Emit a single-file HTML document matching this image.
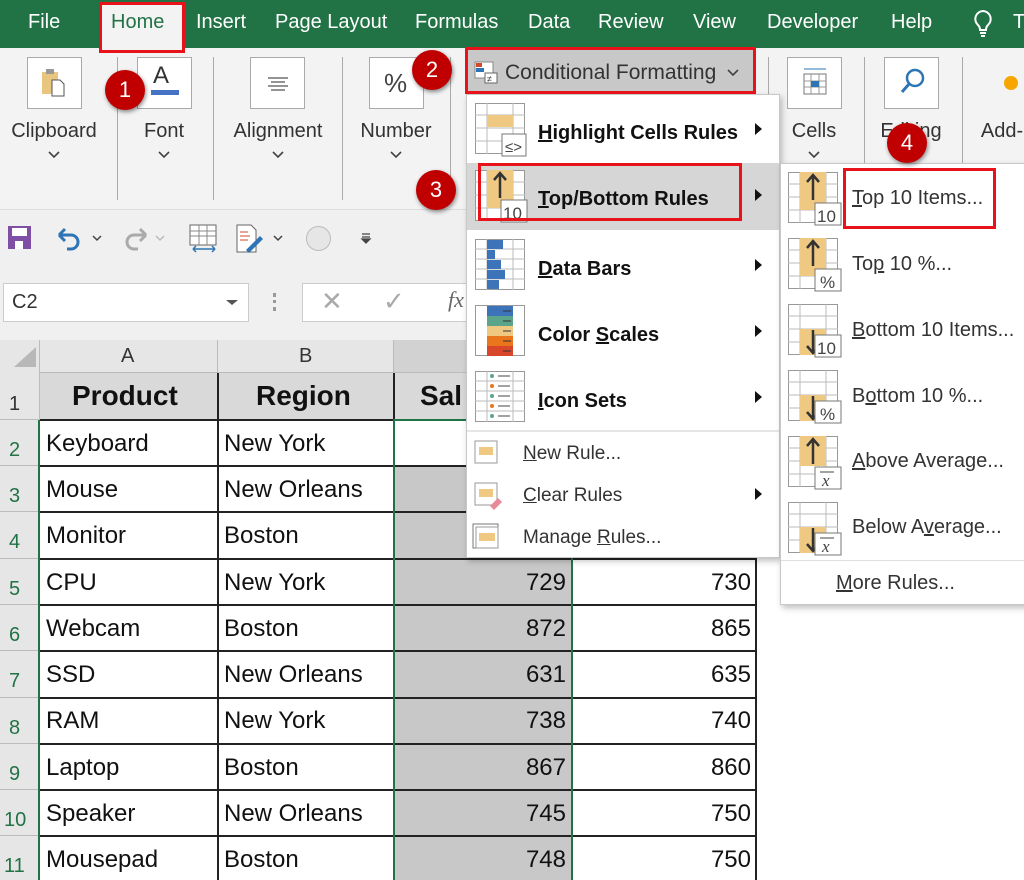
<!DOCTYPE html>
<html><head><meta charset="utf-8"><style>
*{margin:0;padding:0;box-sizing:border-box}
body{width:1024px;height:880px;overflow:hidden;position:relative;background:#fff;font-family:"Liberation Sans",Arial,sans-serif;color:#222}
.a{position:absolute}
.tab{position:absolute;top:11px;color:#fff;font-size:20px}
.ib{position:absolute;top:57px;width:55px;height:52px;background:#fff;border:1px solid #aaa}
.lbl{position:absolute;top:120px;font-size:20px;color:#333;transform:translateX(-50%);white-space:nowrap}
.chev{position:absolute;top:151px;width:12px;height:8px;margin-left:-6px}
.sep{position:absolute;top:57px;width:1px;height:143px;background:#aaa}
.red{position:absolute;border:3px solid #e8121a}
.num{position:absolute;width:40px;height:40px;border-radius:50%;background:#c00000;color:#fff;font-size:22px;text-align:center;line-height:40px;box-shadow:1px 2px 4px rgba(0,0,0,.45)}
.cell{position:absolute;font-size:24px;color:#111;white-space:nowrap}
.c3{position:absolute;right:458px;font-size:24px;color:#111}
.c4{position:absolute;right:273px;font-size:24px;color:#111}
.mi{position:absolute;left:538px;font-size:20px;font-weight:bold;color:#111}
.ms{position:absolute;left:523px;font-size:19px;color:#333}
.arr{position:absolute;left:755px;width:0;height:0;border-left:7px solid #111;border-top:6px solid transparent;border-bottom:6px solid transparent}
.si{position:absolute;left:852px;font-size:20px;color:#333;white-space:nowrap}
u{text-decoration:underline}
</style></head><body>
<div class="a" style="left:0;top:0;width:1024px;height:48px;background:#217346"></div>
<div class="a" style="left:102px;top:5px;width:80px;height:45px;background:#f3f3f3"></div>
<div class="tab" style="left:28px">File</div>
<div class="tab" style="left:111px;color:#217346">Home</div>
<div class="tab" style="left:196px">Insert</div>
<div class="tab" style="left:275px">Page Layout</div>
<div class="tab" style="left:415px">Formulas</div>
<div class="tab" style="left:528px">Data</div>
<div class="tab" style="left:598px">Review</div>
<div class="tab" style="left:693px">View</div>
<div class="tab" style="left:767px">Developer</div>
<div class="tab" style="left:891px">Help</div>
<svg class="a" style="left:972px;top:9px" width="22" height="30" viewBox="0 0 22 30"><path d="M11 2a8 8 0 0 0-5 14c1 1 2 3 2 5h6c0-2 1-4 2-5a8 8 0 0 0-5-14z" fill="none" stroke="#fff" stroke-width="2"/><path d="M8 24h6M9 27h4" stroke="#fff" stroke-width="2"/></svg>
<div class="tab" style="left:1013px">T</div>
<div class="a" style="left:0;top:48px;width:1024px;height:162px;background:#f3f3f3"></div>
<div class="ib" style="left:27px"><svg width="53" height="50"><rect x="14" y="14" width="16" height="22" fill="#e9c57f"/><rect x="18" y="11" width="8" height="5" fill="#999"/><path d="M24 22h8l4 4v12H24z" fill="#fff" stroke="#555"/></svg></div>
<div class="ib" style="left:137px"><div style="position:absolute;left:15px;top:4px;font-size:24px;color:#333">A</div><div style="position:absolute;left:13px;top:32px;width:28px;height:5px;background:#4472c4"></div></div>
<div class="ib" style="left:250px"><svg width="53" height="50"><path d="M17 20h20M20 24h14M17 28h20M20 32h14" stroke="#555" stroke-width="1.3"/></svg></div>
<div class="ib" style="left:369px"><div style="position:absolute;left:14px;top:10px;font-size:26px;color:#444">%</div></div>
<div class="ib" style="left:787px"><svg width="53" height="50"><rect x="16" y="16" width="22" height="20" fill="#fff" stroke="#777"/><path d="M16 23h22M16 29h22M23 16v20M31 16v20" stroke="#999"/><rect x="23" y="23" width="8" height="6" fill="#2e75b6"/><path d="M16 11h22" stroke="#2e75b6"/></svg></div>
<div class="ib" style="left:884px"><svg width="53" height="50"><circle cx="30" cy="20" r="8" fill="none" stroke="#2e75b6" stroke-width="2.5"/><path d="M24 26l-7 8" stroke="#2e75b6" stroke-width="3"/></svg></div>
<div class="a" style="left:1004px;top:76px;width:14px;height:14px;border-radius:50%;background:#f7a600"></div>
<div class="lbl" style="left:54px">Clipboard</div>
<div class="lbl" style="left:164px">Font</div>
<div class="lbl" style="left:278px">Alignment</div>
<div class="lbl" style="left:396px">Number</div>
<div class="lbl" style="left:814px">Cells</div>
<div class="lbl" style="left:911px">Editing</div>
<div class="lbl" style="left:1002px">Add-</div>
<svg class="chev" style="left:54px"><path d="M1 1l5 5 5-5" fill="none" stroke="#444" stroke-width="1.6"/></svg>
<svg class="chev" style="left:164px"><path d="M1 1l5 5 5-5" fill="none" stroke="#444" stroke-width="1.6"/></svg>
<svg class="chev" style="left:278px"><path d="M1 1l5 5 5-5" fill="none" stroke="#444" stroke-width="1.6"/></svg>
<svg class="chev" style="left:396px"><path d="M1 1l5 5 5-5" fill="none" stroke="#444" stroke-width="1.6"/></svg>
<svg class="chev" style="left:814px"><path d="M1 1l5 5 5-5" fill="none" stroke="#444" stroke-width="1.6"/></svg>
<div class="sep" style="left:117px"></div><div class="sep" style="left:213px"></div><div class="sep" style="left:342px"></div><div class="sep" style="left:450px"></div><div class="sep" style="left:768px"></div><div class="sep" style="left:864px"></div><div class="sep" style="left:962px"></div>
<div class="a" style="left:466px;top:48px;width:289px;height:45px;background:#c8c8c8"></div>
<svg class="a" style="left:474px;top:61px" width="26" height="24"><rect x="1" y="1" width="18" height="16" fill="#fff" stroke="#888"/><rect x="2" y="2" width="6" height="4" fill="#d04a2a"/><rect x="2" y="7" width="8" height="4" fill="#2e75b6"/><rect x="11" y="12" width="12" height="10" fill="#fff" stroke="#666"/><text x="13" y="21" font-size="9" fill="#333">≠</text></svg>
<div class="a" style="left:505px;top:61px;font-size:21px;color:#333">Conditional Formatting</div>
<svg class="a" style="left:727px;top:69px" width="12" height="8"><path d="M1 1l5 5 5-5" fill="none" stroke="#444" stroke-width="1.6"/></svg>
<div class="a" style="left:0;top:210px;width:1024px;height:55px;background:#f0f0f0"></div>
<div class="a" style="left:0;top:209px;width:466px;height:1px;background:#ddd"></div>
<svg class="a" style="left:8px;top:226px" width="24" height="24"><rect x="0" y="0" width="23" height="23" fill="#7f4fa6"/><rect x="4" y="2" width="15" height="8" fill="#fff"/><rect x="7" y="15" width="8" height="8" fill="#fff"/></svg>
<svg class="a" style="left:55px;top:226px" width="50" height="26"><path d="M4 9h12a7 7 0 0 1 0 14h-4M4 9l6-6M4 9l6 6" fill="none" stroke="#2e75b6" stroke-width="3"/><path d="M38 10l4 4 4-4" fill="none" stroke="#444" stroke-width="1.5"/></svg>
<svg class="a" style="left:120px;top:226px" width="50" height="26"><path d="M26 9H14a7 7 0 0 0 0 14h4M26 9l-6-6M26 9l-6 6" fill="none" stroke="#aaa" stroke-width="3"/><path d="M36 10l4 4 4-4" fill="none" stroke="#bbb" stroke-width="1.5"/></svg>
<svg class="a" style="left:189px;top:224px" width="30" height="30"><rect x="1" y="1" width="26" height="20" fill="#fff" stroke="#666"/><path d="M1 7h26M1 12h26M10 1v20M18 1v20" stroke="#888"/><path d="M4 25h22M4 25l3-3M4 25l3 3M26 25l-3-3M26 25l-3 3" stroke="#2e75b6" stroke-width="1.5" fill="none"/></svg>
<svg class="a" style="left:236px;top:224px" width="50" height="30"><path d="M1 1h14l5 5v22H1z" fill="#fff" stroke="#666"/><path d="M4 8h8M4 12h10M4 16h8" stroke="#d04a2a"/><path d="M10 26l14-14 3 3-14 14z" fill="#2e75b6"/><path d="M38 12l4 4 4-4" fill="none" stroke="#444" stroke-width="1.5"/></svg>
<div class="a" style="left:306px;top:226px;width:25px;height:25px;border-radius:50%;border:1px solid #bbb;background:#e6e6e6"></div>
<svg class="a" style="left:360px;top:232px" width="12" height="12"><path d="M2 2h8M2 5h8M6 11L2 7h8z" stroke="#444" fill="#444" stroke-width="1.3"/></svg>
<div class="a" style="left:0;top:265px;width:1024px;height:75px;background:#f0f0f0"></div>
<div class="a" style="left:3px;top:283px;width:246px;height:39px;background:#fff;border:1px solid #ccc"></div>
<div class="a" style="left:12px;top:291px;font-size:20px;color:#333">C2</div>
<div class="a" style="left:226px;top:300px;border-left:6px solid transparent;border-right:6px solid transparent;border-top:5px solid #555"></div>
<div class="a" style="left:273px;top:293px;width:3px;height:18px;border-left:3px dotted #999"></div>
<div class="a" style="left:302px;top:283px;width:170px;height:39px;background:#fff;border:1px solid #ccc"></div>
<div class="a" style="left:321px;top:286px;font-size:26px;color:#aaa">✕</div>
<div class="a" style="left:383px;top:286px;font-size:26px;color:#aaa">✓</div>
<div class="a" style="left:448px;top:287px;font-size:22px;color:#666;font-style:italic;font-family:'Liberation Serif',serif">fx</div>
<div class="a" style="left:0;top:340px;width:1024px;height:33px;background:#e6e6e6"></div>
<div class="a" style="left:0;top:340px;width:40px;height:540px;background:#e6e6e6"></div>
<div class="a" style="left:394px;top:340px;width:178px;height:33px;background:#d2d2d2"></div>
<div class="a" style="left:14px;top:347px;border-left:22px solid transparent;border-bottom:20px solid #b8b8b8"></div>
<div class="a" style="left:121px;top:345px;font-size:20px;color:#333">A</div>
<div class="a" style="left:299px;top:345px;font-size:20px;color:#333">B</div>
<div class="a" style="left:217px;top:340px;width:1px;height:33px;background:#bbb"></div>
<div class="a" style="left:393px;top:340px;width:1px;height:33px;background:#bbb"></div>
<div class="a" style="left:571px;top:340px;width:1px;height:33px;background:#bbb"></div>
<div class="a" style="left:40px;top:372px;width:984px;height:1px;background:#bbb"></div>
<div class="a" style="left:39px;top:340px;width:1px;height:540px;background:#bbb"></div>
<div class="a" style="left:40px;top:373px;width:716px;height:47px;background:#d9d9d9"></div>
<div class="a" style="left:394px;top:466px;width:178px;height:414px;background:#c8c8c8"></div>
<div class="a" style="left:217px;top:373px;width:2px;height:507px;background:#222"></div>
<div class="a" style="left:393px;top:373px;width:2px;height:507px;background:#222"></div>
<div class="a" style="left:571px;top:373px;width:2px;height:507px;background:#222"></div>
<div class="a" style="left:755px;top:373px;width:2px;height:507px;background:#222"></div>
<div class="a" style="left:40px;top:419px;width:716px;height:2px;background:#222"></div>
<div class="a" style="left:40px;top:465px;width:716px;height:2px;background:#222"></div>
<div class="a" style="left:40px;top:511px;width:716px;height:2px;background:#222"></div>
<div class="a" style="left:40px;top:558px;width:716px;height:2px;background:#222"></div>
<div class="a" style="left:40px;top:604px;width:716px;height:2px;background:#222"></div>
<div class="a" style="left:40px;top:650px;width:716px;height:2px;background:#222"></div>
<div class="a" style="left:40px;top:697px;width:716px;height:2px;background:#222"></div>
<div class="a" style="left:40px;top:743px;width:716px;height:2px;background:#222"></div>
<div class="a" style="left:40px;top:789px;width:716px;height:2px;background:#222"></div>
<div class="a" style="left:40px;top:835px;width:716px;height:2px;background:#222"></div>
<div class="a" style="left:0;top:419px;width:40px;height:1px;background:#bbb"></div>
<div class="a" style="left:0;top:465px;width:40px;height:1px;background:#bbb"></div>
<div class="a" style="left:0;top:511px;width:40px;height:1px;background:#bbb"></div>
<div class="a" style="left:0;top:558px;width:40px;height:1px;background:#bbb"></div>
<div class="a" style="left:0;top:604px;width:40px;height:1px;background:#bbb"></div>
<div class="a" style="left:0;top:650px;width:40px;height:1px;background:#bbb"></div>
<div class="a" style="left:0;top:697px;width:40px;height:1px;background:#bbb"></div>
<div class="a" style="left:0;top:743px;width:40px;height:1px;background:#bbb"></div>
<div class="a" style="left:0;top:789px;width:40px;height:1px;background:#bbb"></div>
<div class="a" style="left:0;top:835px;width:40px;height:1px;background:#bbb"></div>
<div class="a" style="left:38px;top:420px;width:2px;height:460px;background:#217346"></div>
<div class="a" style="left:393px;top:419px;width:180px;height:461px;border:2px solid #217346;border-bottom:none"></div>
<div class="a" style="left:9px;top:393px;font-size:20px;color:#333">1</div>
<div class="a" style="left:9px;top:439px;font-size:20px;color:#217346">2</div>
<div class="a" style="left:9px;top:485px;font-size:20px;color:#217346">3</div>
<div class="a" style="left:9px;top:531px;font-size:20px;color:#217346">4</div>
<div class="a" style="left:9px;top:578px;font-size:20px;color:#217346">5</div>
<div class="a" style="left:9px;top:624px;font-size:20px;color:#217346">6</div>
<div class="a" style="left:9px;top:670px;font-size:20px;color:#217346">7</div>
<div class="a" style="left:9px;top:717px;font-size:20px;color:#217346">8</div>
<div class="a" style="left:9px;top:763px;font-size:20px;color:#217346">9</div>
<div class="a" style="left:4px;top:809px;font-size:20px;color:#217346">10</div>
<div class="a" style="left:4px;top:855px;font-size:20px;color:#217346">11</div>
<div class="cell" style="left:72px;top:380px;font-weight:bold;font-size:28px">Product</div>
<div class="cell" style="left:256px;top:380px;font-weight:bold;font-size:28px">Region</div>
<div class="cell" style="left:420px;top:380px;font-weight:bold;font-size:28px">Sal</div>
<div class="cell" style="left:46px;top:430px">Keyboard</div><div class="cell" style="left:224px;top:430px">New York</div>
<div class="cell" style="left:46px;top:476px">Mouse</div><div class="cell" style="left:224px;top:476px">New Orleans</div>
<div class="cell" style="left:46px;top:522px">Monitor</div><div class="cell" style="left:224px;top:522px">Boston</div>
<div class="cell" style="left:46px;top:569px">CPU</div><div class="cell" style="left:224px;top:569px">New York</div>
<div class="cell" style="left:46px;top:615px">Webcam</div><div class="cell" style="left:224px;top:615px">Boston</div>
<div class="cell" style="left:46px;top:661px">SSD</div><div class="cell" style="left:224px;top:661px">New Orleans</div>
<div class="cell" style="left:46px;top:707px">RAM</div><div class="cell" style="left:224px;top:707px">New York</div>
<div class="cell" style="left:46px;top:754px">Laptop</div><div class="cell" style="left:224px;top:754px">Boston</div>
<div class="cell" style="left:46px;top:800px">Speaker</div><div class="cell" style="left:224px;top:800px">New Orleans</div>
<div class="cell" style="left:46px;top:846px">Mousepad</div><div class="cell" style="left:224px;top:846px">Boston</div>
<div class="c3" style="top:569px">729</div><div class="c4" style="top:569px">730</div>
<div class="c3" style="top:615px">872</div><div class="c4" style="top:615px">865</div>
<div class="c3" style="top:661px">631</div><div class="c4" style="top:661px">635</div>
<div class="c3" style="top:707px">738</div><div class="c4" style="top:707px">740</div>
<div class="c3" style="top:754px">867</div><div class="c4" style="top:754px">860</div>
<div class="c3" style="top:800px">745</div><div class="c4" style="top:800px">750</div>
<div class="c3" style="top:846px">748</div><div class="c4" style="top:846px">750</div>
<div class="a" style="left:466px;top:94px;width:314px;height:464px;background:#fff;border:1px solid #c8c8c8;box-shadow:2px 3px 6px rgba(0,0,0,.25)"></div>
<div class="a" style="left:467px;top:163px;width:312px;height:67px;background:#d6d6d6"></div>
<div class="a" style="left:467px;top:430px;width:312px;height:2px;background:#e6e6e6"></div>
<svg class="a" style="left:475px;top:103px" width="55" height="55"><rect x="0.5" y="0.5" width="49" height="50" fill="#fff" stroke="#999"/><path d="M0 12h50M0 25h50M0 38h50M12 0v51M38 0v51" stroke="#bbb"/><rect x="12" y="12" width="26" height="12" fill="#efc982"/><rect x="27" y="31" width="24" height="22" fill="#fff" stroke="#777"/><text x="30" y="49" font-size="15" fill="#444">≤&gt;</text></svg>
<svg class="a" style="left:475px;top:170px" width="55" height="55"><rect x="0.5" y="0.5" width="49" height="50" fill="#fff" stroke="#999"/><path d="M0 12h50M0 25h50M0 38h50M12 0v51M38 0v51" stroke="#bbb"/><rect x="12" y="0" width="26" height="38" fill="#efc982"/><path d="M25 28V4M19 10l6-7 6 7" stroke="#333" stroke-width="2.5" fill="none"/><rect x="26" y="30" width="26" height="22" fill="#fff" stroke="#777"/><text x="28" y="49" font-size="17" fill="#444">10</text></svg>
<svg class="a" style="left:475px;top:239px" width="55" height="55"><rect x="0.5" y="0.5" width="49" height="50" fill="#fff" stroke="#999"/><path d="M0 10h50M0 20h50M0 30h50M0 40h50M12 0v51M38 0v51" stroke="#bbb"/><rect x="12" y="1" width="16" height="9" fill="#3d73b8"/><rect x="12" y="11" width="8" height="9" fill="#3d73b8"/><rect x="12" y="21" width="14" height="9" fill="#3d73b8"/><rect x="12" y="31" width="18" height="9" fill="#3d73b8"/><rect x="12" y="41" width="12" height="9" fill="#3d73b8"/></svg>
<svg class="a" style="left:475px;top:305px" width="55" height="55"><rect x="0.5" y="0.5" width="49" height="50" fill="#fff" stroke="#999"/><rect x="12" y="1" width="26" height="10" fill="#3d73b8"/><rect x="12" y="11" width="26" height="10" fill="#5ba58a"/><rect x="12" y="21" width="26" height="10" fill="#efc982"/><rect x="12" y="31" width="26" height="10" fill="#e9761c"/><rect x="12" y="41" width="26" height="10" fill="#d9472b"/><path d="M28 6h8M28 16h8M28 26h8M28 36h8M28 46h8" stroke="#333"/></svg>
<svg class="a" style="left:475px;top:371px" width="55" height="55"><rect x="0.5" y="0.5" width="49" height="50" fill="#fff" stroke="#999"/><path d="M0 10h50M0 20h50M0 30h50M0 40h50M12 0v51M38 0v51" stroke="#bbb"/><circle cx="17" cy="5" r="2" fill="#5ba58a"/><circle cx="17" cy="15" r="2" fill="#e9761c"/><circle cx="17" cy="25" r="2" fill="#5ba58a"/><circle cx="17" cy="35" r="2" fill="#e9761c"/><circle cx="17" cy="45" r="2" fill="#5ba58a"/><path d="M23 5h12M23 15h12M23 25h12M23 35h12M23 45h12" stroke="#444"/></svg>
<svg class="a" style="left:474px;top:440px" width="26" height="26"><rect x="1" y="1" width="22" height="22" fill="#fff" stroke="#999"/><rect x="5" y="7" width="14" height="8" fill="#efc982"/></svg>
<svg class="a" style="left:474px;top:482px" width="30" height="28"><rect x="1" y="1" width="22" height="22" fill="#fff" stroke="#999"/><rect x="5" y="7" width="14" height="8" fill="#efc982"/><path d="M16 24l8-8 4 4-8 8z" fill="#e88a9a"/></svg>
<svg class="a" style="left:472px;top:523px" width="30" height="28"><rect x="1" y="1" width="25" height="24" fill="#fff" stroke="#777"/><rect x="4" y="4" width="22" height="21" fill="#fff" stroke="#999"/><rect x="7" y="10" width="16" height="8" fill="#efc982"/></svg>
<div class="mi" style="top:122px"><u>H</u>ighlight Cells Rules</div>
<div class="mi" style="top:188px"><u>T</u>op/Bottom Rules</div>
<div class="mi" style="top:258px"><u>D</u>ata Bars</div>
<div class="mi" style="top:324px">Color <u>S</u>cales</div>
<div class="mi" style="top:390px"><u>I</u>con Sets</div>
<div class="ms" style="top:443px"><u>N</u>ew Rule...</div>
<div class="ms" style="top:485px"><u>C</u>lear Rules</div>
<div class="ms" style="top:527px">Manage <u>R</u>ules...</div>
<div class="arr" style="top:123px"></div><div class="arr" style="top:189px"></div><div class="arr" style="top:259px"></div><div class="arr" style="top:325px"></div><div class="arr" style="top:391px"></div><div class="arr" style="top:488px"></div>
<div class="a" style="left:780px;top:163px;width:250px;height:442px;background:#fff;border:1px solid #c8c8c8;box-shadow:2px 3px 6px rgba(0,0,0,.25)"></div>
<div class="a" style="left:781px;top:560px;width:243px;height:1px;background:#e0e0e0"></div>
<svg class="a" style="left:788px;top:172px" width="56" height="56"><rect x="0.5" y="0.5" width="49" height="50" fill="#fff" stroke="#999"/><path d="M0 12h50M0 25h50M0 38h50M12 0v51M38 0v51" stroke="#bbb"/><rect x="12" y="0" width="26" height="38" fill="#efc982"/><path d="M25 28V4M19 10l6-7 6 7" stroke="#333" stroke-width="2.5" fill="none"/><rect x="27" y="31" width="26" height="22" fill="#fff" stroke="#777"/><text x="29" y="50" font-size="17" fill="#444">10</text></svg>
<svg class="a" style="left:788px;top:238px" width="56" height="56"><rect x="0.5" y="0.5" width="49" height="50" fill="#fff" stroke="#999"/><path d="M0 12h50M0 25h50M0 38h50M12 0v51M38 0v51" stroke="#bbb"/><rect x="12" y="0" width="26" height="38" fill="#efc982"/><path d="M25 28V4M19 10l6-7 6 7" stroke="#333" stroke-width="2.5" fill="none"/><rect x="27" y="31" width="26" height="22" fill="#fff" stroke="#777"/><text x="32" y="50" font-size="17" fill="#444">%</text></svg>
<svg class="a" style="left:788px;top:304px" width="56" height="56"><rect x="0.5" y="0.5" width="49" height="50" fill="#fff" stroke="#999"/><path d="M0 12h50M0 25h50M0 38h50M12 0v51M38 0v51" stroke="#bbb"/><rect x="12" y="25" width="26" height="26" fill="#efc982"/><path d="M25 26v22M19 42l6 7 6-7" stroke="#333" stroke-width="2.5" fill="none"/><rect x="27" y="31" width="26" height="22" fill="#fff" stroke="#777"/><text x="29" y="50" font-size="17" fill="#444">10</text></svg>
<svg class="a" style="left:788px;top:370px" width="56" height="56"><rect x="0.5" y="0.5" width="49" height="50" fill="#fff" stroke="#999"/><path d="M0 12h50M0 25h50M0 38h50M12 0v51M38 0v51" stroke="#bbb"/><rect x="12" y="25" width="26" height="26" fill="#efc982"/><path d="M25 26v22M19 42l6 7 6-7" stroke="#333" stroke-width="2.5" fill="none"/><rect x="27" y="31" width="26" height="22" fill="#fff" stroke="#777"/><text x="32" y="50" font-size="17" fill="#444">%</text></svg>
<svg class="a" style="left:788px;top:436px" width="56" height="56"><rect x="0.5" y="0.5" width="49" height="50" fill="#fff" stroke="#999"/><path d="M0 12h50M0 25h50M0 38h50M12 0v51M38 0v51" stroke="#bbb"/><rect x="12" y="0" width="26" height="30" fill="#efc982"/><path d="M25 28V4M19 10l6-7 6 7" stroke="#333" stroke-width="2.5" fill="none"/><rect x="27" y="31" width="26" height="22" fill="#fff" stroke="#777"/><text x="34" y="50" font-size="17" font-style="italic" font-family="Liberation Serif" fill="#444">x</text><path d="M32 36h14" stroke="#444"/></svg>
<svg class="a" style="left:788px;top:502px" width="56" height="56"><rect x="0.5" y="0.5" width="49" height="50" fill="#fff" stroke="#999"/><path d="M0 12h50M0 25h50M0 38h50M12 0v51M38 0v51" stroke="#bbb"/><rect x="12" y="25" width="26" height="26" fill="#efc982"/><path d="M25 26v22M19 42l6 7 6-7" stroke="#333" stroke-width="2.5" fill="none"/><rect x="27" y="31" width="26" height="22" fill="#fff" stroke="#777"/><text x="34" y="50" font-size="17" font-style="italic" font-family="Liberation Serif" fill="#444">x</text><path d="M32 36h14" stroke="#444"/></svg>
<div class="si" style="top:187px"><u>T</u>op 10 Items...</div>
<div class="si" style="top:253px">To<u>p</u> 10 %...</div>
<div class="si" style="top:319px"><u>B</u>ottom 10 Items...</div>
<div class="si" style="top:385px">B<u>o</u>ttom 10 %...</div>
<div class="si" style="top:450px"><u>A</u>bove Average...</div>
<div class="si" style="top:516px">Below A<u>v</u>erage...</div>
<div class="si" style="left:836px;top:572px"><u>M</u>ore Rules...</div>
<div class="red" style="left:99px;top:2px;width:86px;height:51px"></div>
<div class="red" style="left:465px;top:47px;width:291px;height:47px"></div>
<div class="red" style="left:478px;top:163px;width:264px;height:58px"></div>
<div class="red" style="left:843px;top:168px;width:153px;height:61px"></div>
<div class="num" style="left:105px;top:70px">1</div>
<div class="num" style="left:412px;top:50px">2</div>
<div class="num" style="left:416px;top:170px">3</div>
<div class="num" style="left:887px;top:123px">4</div>
</body></html>
